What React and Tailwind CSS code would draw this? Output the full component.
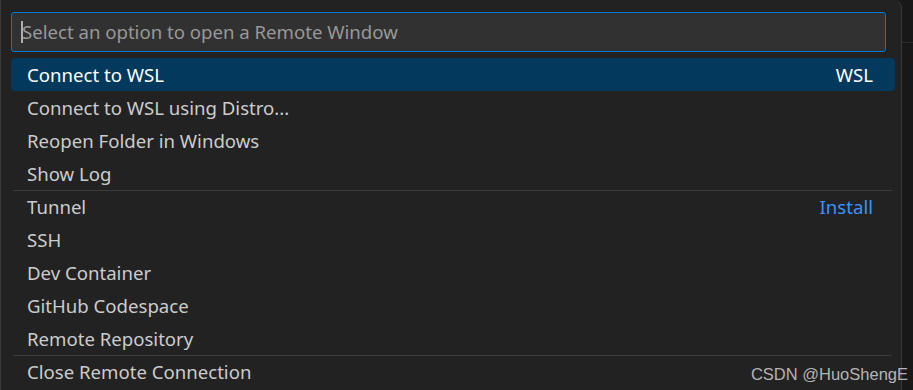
import React from 'react';

const groups = [
    [
        { label: 'Connect to WSL', right: 'WSL', selected: true },
        { label: 'Connect to WSL using Distro...' },
        { label: 'Reopen Folder in Windows' },
        { label: 'Show Log' },
    ],
    [
        { label: 'Tunnel', link: 'Install' },
        { label: 'SSH' },
        { label: 'Dev Container' },
        { label: 'GitHub Codespace' },
        { label: 'Remote Repository' },
    ],
    [
        { label: 'Close Remote Connection' },
    ],
];

function Row({ item }) {
    return (
        <div
            className={
                item.selected
                    ? 'flex items-center justify-between h-[33px] pl-[16px] pr-[22px] rounded-[4px] bg-[#04395e] text-white'
                    : 'flex items-center justify-between h-[33px] pl-[16px] pr-[22px] text-[#cccccc]'
            }
        >
            <span>{item.label}</span>
            {item.right && <span>{item.right}</span>}
            {item.link && <span className="text-[#3794ff]">{item.link}</span>}
        </div>
    );
}

export default function App() {
    return (
        <div className="relative flex w-[913px] h-[390px] overflow-hidden bg-[#181818] font-['Noto_Sans',sans-serif] text-[18.6px]">
            {/* quick pick panel */}
            <div className="w-[902px] h-full bg-[#222222] border-l border-r border-[#3a3a3a] rounded-tr-[8px] pl-[10px] pr-[6px] pt-[12px]">
                <div className="flex items-center h-[40px] mr-[9px] bg-[#313131] border border-[#0078d4] rounded-[3px] pl-[9px]">
                    <span className="w-[2px] h-[22px] bg-[#aeafad] mr-[-1px]" />
                    <span className="text-[#989898]">Select an option to open a Remote Window</span>
                </div>
                <div className="mt-[6px]">
                    {groups.map((group, gi) => (
                        <div key={gi} className={gi > 0 ? 'relative' : ''}>
                            {gi > 0 && <div className="absolute top-0 left-[2px] right-[3px] h-px bg-[#3c3c3c]" />}
                            {group.map((item) => (
                                <Row key={item.label} item={item} />
                            ))}
                        </div>
                    ))}
                </div>
            </div>
            <div className="flex-1 pt-[42px]">
                <div className="h-px bg-[#2b2b2b]" />
            </div>

            {/* watermark */}
            <div className="absolute right-[5px] bottom-[3px] font-['Liberation_Sans',sans-serif] text-[16.5px] text-[#b4b4b4]">
                CSDN @HuoShengE
            </div>
        </div>
    );
}
